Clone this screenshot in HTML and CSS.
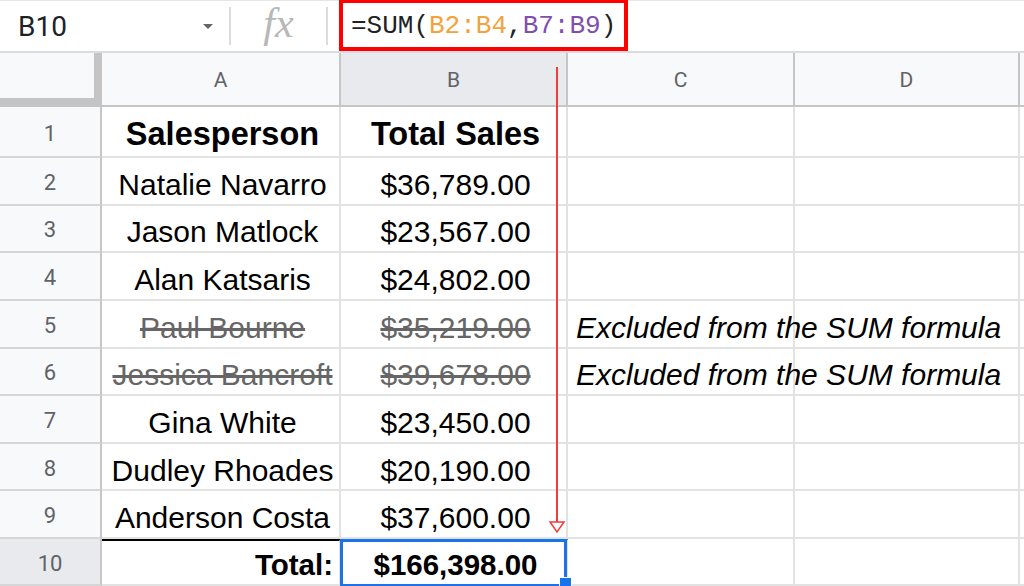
FILE: index.html
```html
<!DOCTYPE html>
<html lang="en">
<head>
    <meta charset="UTF-8">
    <meta name="viewport" content="width=device-width, initial-scale=1.0">
    <title>SUM non-adjacent ranges</title>
    <link rel="stylesheet" href="styles.css">
</head>
<body>
    <div class="formula-bar">
        <div class="name-box">
            <span>B10</span>
            <span class="caret"></span>
        </div>
        <div class="sep"></div>
        <div class="fx">fx</div>
        <div class="sep"></div>
        <div class="formula">=SUM(<span class="ref-a">B2:B4</span>,<span class="ref-b">B7:B9</span>)</div>
    </div>

    <div class="sheet">
        <div class="corner"></div>
        <div class="col-head">A</div>
        <div class="col-head selected">B</div>
        <div class="col-head">C</div>
        <div class="col-head">D</div>
        <div class="col-head"></div>

        <div class="row-head">1</div>
        <div class="cell bold big">Salesperson</div>
        <div class="cell bold big">Total Sales</div>
        <div class="cell"></div>
        <div class="cell"></div>
        <div class="cell"></div>

        <div class="row-head">2</div>
        <div class="cell">Natalie Navarro</div>
        <div class="cell">$36,789.00</div>
        <div class="cell"></div>
        <div class="cell"></div>
        <div class="cell"></div>

        <div class="row-head">3</div>
        <div class="cell">Jason Matlock</div>
        <div class="cell">$23,567.00</div>
        <div class="cell"></div>
        <div class="cell"></div>
        <div class="cell"></div>

        <div class="row-head">4</div>
        <div class="cell">Alan Katsaris</div>
        <div class="cell">$24,802.00</div>
        <div class="cell"></div>
        <div class="cell"></div>
        <div class="cell"></div>

        <div class="row-head">5</div>
        <div class="cell struck">Paul Bourne</div>
        <div class="cell struck">$35,219.00</div>
        <div class="cell note">Excluded from the SUM formula</div>
        <div class="cell"></div>
        <div class="cell"></div>

        <div class="row-head">6</div>
        <div class="cell struck">Jessica Bancroft</div>
        <div class="cell struck">$39,678.00</div>
        <div class="cell note">Excluded from the SUM formula</div>
        <div class="cell"></div>
        <div class="cell"></div>

        <div class="row-head">7</div>
        <div class="cell">Gina White</div>
        <div class="cell">$23,450.00</div>
        <div class="cell"></div>
        <div class="cell"></div>
        <div class="cell"></div>

        <div class="row-head">8</div>
        <div class="cell">Dudley Rhoades</div>
        <div class="cell">$20,190.00</div>
        <div class="cell"></div>
        <div class="cell"></div>
        <div class="cell"></div>

        <div class="row-head">9</div>
        <div class="cell">Anderson Costa</div>
        <div class="cell">$37,600.00</div>
        <div class="cell"></div>
        <div class="cell"></div>
        <div class="cell"></div>

        <div class="row-head selected">10</div>
        <div class="cell bold total right">Total:</div>
        <div class="cell bold total active">$166,398.00</div>
        <div class="cell"></div>
        <div class="cell"></div>
        <div class="cell"></div>

        <svg class="arrow" width="20" height="470" viewBox="0 0 20 470">
            <line x1="10" y1="0" x2="10" y2="455" stroke="#f23b3b" stroke-width="2"/>
            <polygon points="3,455 17,455 10,465" fill="#fff" stroke="#f23b3b" stroke-width="1.5"/>
        </svg>
    </div>
</body>
</html>
```

FILE: styles.css
```css
* {
    box-sizing: border-box;
}

body {
    margin: 0;
    background: #fff;
    font-family: "Liberation Sans", Arial, sans-serif;
    color: #000;
    overflow: hidden;
}

/* formula bar */

.formula-bar {
    display: flex;
    align-items: center;
    height: 53px;
    border-top: 1px solid #e6e6e6;
    border-bottom: 2px solid #dadce0;
}

.name-box {
    width: 229px;
    display: flex;
    align-items: center;
    justify-content: space-between;
    padding: 0 16px 0 18px;
    font-family: Roboto, sans-serif;
    font-size: 28px;
    color: #202124;
}

.caret {
    width: 0;
    height: 0;
    border-left: 5px solid transparent;
    border-right: 5px solid transparent;
    border-top: 5px solid #666;
}

.sep {
    width: 2px;
    height: 38px;
    background: #dadce0;
}

.fx {
    width: 95px;
    text-align: center;
    font-family: "Liberation Serif", serif;
    font-style: italic;
    font-size: 42px;
    line-height: 1;
    color: #b8b8b8;
    padding-bottom: 6px;
}

.formula {
    margin-left: 11px;
    height: 52px;
    margin-top: -2px;
    border: 4px solid #f00;
    padding: 2px 8px 0;
    display: flex;
    align-items: center;
    font-family: "Liberation Mono", monospace;
    font-size: 26px;
    color: #202124;
}

.ref-a {
    color: #f2a33c;
}

.ref-b {
    color: #7e4fb0;
}

/* grid */

.sheet {
    position: relative;
    display: grid;
    grid-template-columns: 102px 239px 227px 227px 225px 1fr;
    grid-template-rows: 54px 51px repeat(8, 47.625px) 1fr;
    height: 533px;
}

.corner {
    background: #f8f9fa;
    border-right: 8px solid #c4c4c4;
    border-bottom: 9px solid #c4c4c4;
}

.col-head {
    display: flex;
    align-items: center;
    justify-content: center;
    padding-top: 2px;
    background: #f8f9fa;
    border-right: 2px solid #c6c6c6;
    border-bottom: 2px solid #c6c6c6;
    font-family: Roboto, sans-serif;
    font-size: 21px;
    color: #5f6368;
}

.row-head {
    display: flex;
    align-items: center;
    justify-content: center;
    padding-top: 3px;
    background: #f8f9fa;
    border-right: 2px solid #c6c6c6;
    border-bottom: 2px solid #d6d6d6;
    font-family: Roboto, sans-serif;
    font-size: 22px;
    color: #5f6368;
}

.selected {
    background: #e8eaed;
}

.cell {
    display: flex;
    align-items: center;
    justify-content: center;
    padding: 8px 6px 0 10px;
    border-right: 2px solid #e2e2e2;
    border-bottom: 2px solid #e2e2e2;
    font-size: 30px;
    white-space: nowrap;
}

.bold {
    font-weight: bold;
}

.big {
    font-size: 32.5px;
    padding-top: 6px;
}

.right {
    justify-content: flex-end;
    padding-right: 6px;
}

.struck {
    color: #666;
    text-decoration: line-through;
}

.note {
    justify-content: flex-start;
    padding-left: 8px;
    overflow: visible;
    font-style: italic;
    position: relative;
    z-index: 1;
}

.total {
    border-top: 2px solid #000;
    padding-top: 4px;
    font-size: 29.5px;
}

.active {
    position: relative;
}

.active::after {
    content: "";
    position: absolute;
    inset: -2px -1px -3px -1px;
    border: 3px solid #1a73e8;
}

.active::before {
    content: "";
    position: absolute;
    right: -6px;
    bottom: -4px;
    width: 11px;
    height: 9px;
    background: #1a73e8;
    border: 1px solid #fff;
    z-index: 2;
}

.arrow {
    position: absolute;
    left: 547px;
    top: 14px;
    z-index: 3;
}
```
